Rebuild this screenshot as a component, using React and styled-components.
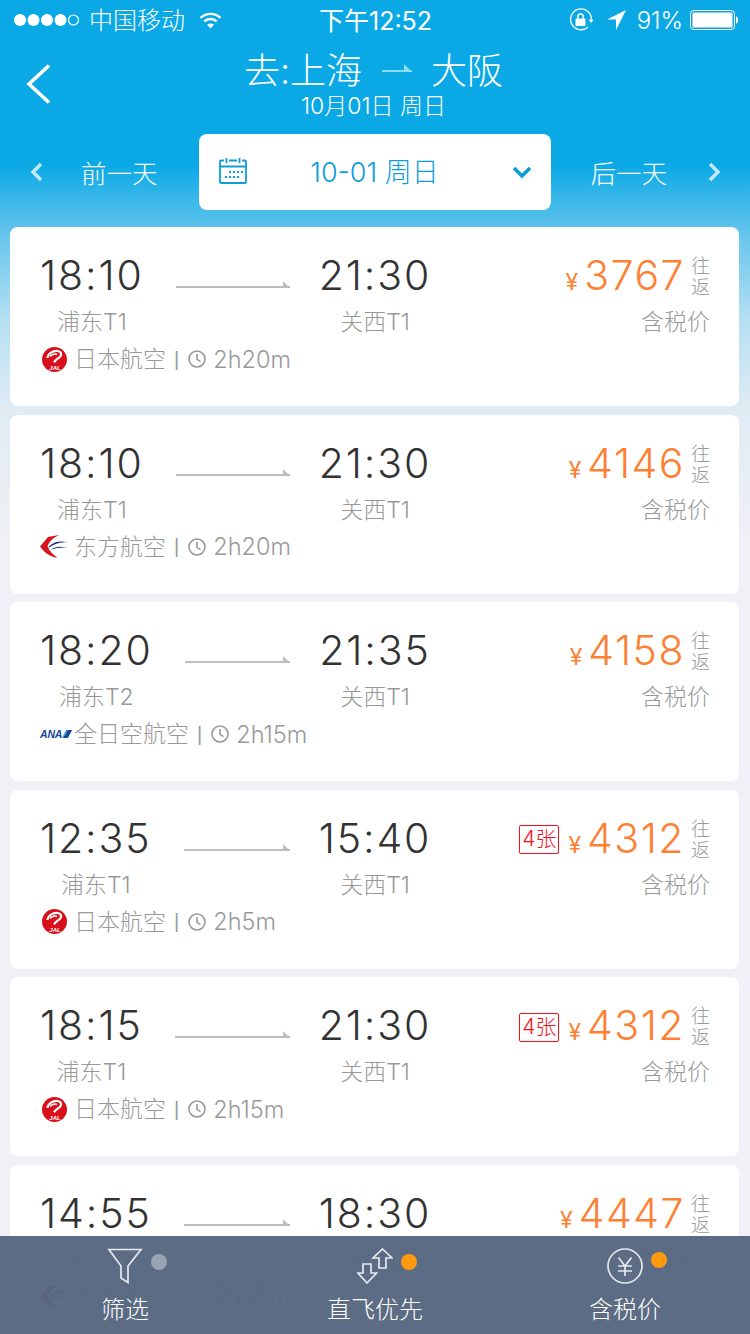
import React from "react";
import styled, { createGlobalStyle } from "styled-components";

const Global = createGlobalStyle`
  html, body {
    margin: 0;
    padding: 0;
    height: 1334px;
    overflow: hidden;
  }
  body {
    font-family: Inter, "Noto Sans CJK SC", sans-serif;
    font-weight: 300;
  }
`;

const Page = styled.div`
  position: relative;
  width: 750px;
  height: 1334px;
  overflow: hidden;
  background: linear-gradient(
    180deg,
    #0aa9e6 0,
    #0aa9e6 165px,
    #62c3ec 230px,
    #b5e0f3 320px,
    #e0ebf4 410px,
    #f0f0f6 540px
  );
`;

const StatusBar = styled.div`
  height: 40px;
  display: flex;
  align-items: center;
  justify-content: space-between;
  padding: 0 12px 0 13px;
  color: #fff;
`;
const StatusSide = styled.div`
  width: 260px;
  display: flex;
  align-items: center;
  justify-content: ${(p) => (p.$right ? "flex-end" : "flex-start")};
  gap: ${(p) => (p.$right ? "7px" : "9px")};
  font-size: 24px;
`;
const Carrier = styled.span`
  padding-bottom: 3px;
  margin-right: 5px;
`;
const StatusIcon = styled.div`
  display: flex;
  margin-right: ${(p) => p.$gap}px;
`;
const StatusTime = styled.div`
  font-size: 25px;
  font-weight: 400;
  padding-bottom: 3px;
`;

const Nav = styled.div`
  display: grid;
  grid-template-columns: 1fr auto 1fr;
  align-items: center;
  padding-top: 9px;
  color: #fff;
`;
const BackSlot = styled.div`
  padding: 4px 0 0 26px;
`;
const NavTitle = styled.div`
  display: flex;
  flex-direction: column;
  align-items: center;
  padding-right: 3px;
`;
const Route = styled.div`
  display: flex;
  align-items: center;
  font-size: 36px;
  line-height: 44px;
  height: 44px;
`;
const RouteArrow = styled.div`
  width: 30px;
  margin: 0 19px 0 20px;
`;
const NavDate = styled.div`
  font-size: 23px;
  line-height: 26px;
`;

const DateRow = styled.div`
  display: grid;
  grid-template-columns: 199px 352px 199px;
  align-items: center;
  margin-top: 15px;
`;
const DayButton = styled.div`
  display: flex;
  align-items: center;
  justify-content: ${(p) => (p.$next ? "flex-end" : "flex-start")};
  gap: ${(p) => (p.$next ? "41px" : "38px")};
  padding: ${(p) => (p.$next ? "0 29px 0 0" : "0 0 0 30px")};
  color: #fff;
  font-size: 25.5px;
`;
const DayLabel = styled.span`
  padding-bottom: 2px;
`;
const DatePicker = styled.div`
  height: 76px;
  box-sizing: border-box;
  background: #fff;
  border-radius: 8px;
  display: flex;
  align-items: center;
  justify-content: space-between;
  padding: 0 19px 0 20px;
  color: #0d9ddb;
  font-size: 27px;
`;
const PickedDate = styled.span`
  margin-right: 10px;
  padding-bottom: 3px;
`;
const CalendarSlot = styled.div`
  display: flex;
  padding-bottom: 3px;
`;

const List = styled.div`
  display: flex;
  flex-direction: column;
  gap: 8.5px;
  padding: 17px 11px 0 10px;
`;
const Card = styled.div`
  height: 179px;
  flex-shrink: 0;
  box-sizing: border-box;
  background: #fff;
  border-radius: 8px;
  padding: 24px 29px 0 30px;
  display: flex;
  justify-content: space-between;
`;
const FlightInfo = styled.div`
  width: 390px;
`;
const Times = styled.div`
  display: flex;
  align-items: flex-start;
`;
const Stop = styled.div`
  display: flex;
  flex-direction: column;
  align-items: center;
  flex-shrink: 0;
  width: ${(p) => p.$width || "auto"};
`;
const Time = styled.div`
  font-size: 41px;
  line-height: 48px;
  letter-spacing: 1.9px;
  color: #333;
`;
const Terminal = styled.div`
  font-size: 23px;
  line-height: 34px;
  margin-top: 6px;
  color: #999;
`;
const FlightArrow = styled.div`
  flex: 1;
  margin: 35px 30px 0 32px;
`;
const LineArrow = styled.div`
  position: relative;
  height: 2px;
  background: ${(p) => p.$color};
  &::after {
    content: "";
    position: absolute;
    right: 0;
    bottom: 0;
    border-style: solid;
    border-width: 0 ${(p) => p.$head}px ${(p) => p.$head}px 0;
    border-color: transparent transparent ${(p) => p.$color} transparent;
  }
`;
const Airline = styled.div`
  display: flex;
  align-items: center;
  height: 30px;
  margin-top: 5px;
  font-size: 23px;
  color: #999;
`;
const LogoSlot = styled.div`
  width: ${(p) => p.$width}px;
  box-sizing: border-box;
  padding-left: ${(p) => p.$inset}px;
  display: flex;
  align-items: center;
  flex-shrink: 0;
`;
const AirlineName = styled.span`
  margin-top: -4px;
`;
const Divider = styled.span`
  margin: 0 9px 0 8px;
  font-family: "Liberation Sans", sans-serif;
  font-size: 20px;
`;
const Duration = styled.span`
  font-size: 23.5px;
  margin-left: 7px;
`;

const PriceInfo = styled.div`
  display: flex;
  flex-direction: column;
  align-items: flex-end;
`;
const PriceRow = styled.div`
  display: flex;
  align-items: center;
  height: 48px;
  color: #fc8134;
`;
const Badge = styled.div`
  width: 40px;
  height: 29px;
  box-sizing: border-box;
  margin: 4px 9px 0 0;
  border: 1px solid #f5101e;
  border-radius: 2px;
  color: #f5101e;
  font-size: 21px;
  line-height: 26px;
  text-align: center;
`;
const Yen = styled.span`
  font-size: 23px;
  font-weight: 400;
  margin: 14px 6px 0 0;
`;
const Amount = styled.span`
  font-size: 41px;
  line-height: 48px;
  letter-spacing: 1.5px;
`;
const RoundTrip = styled.div`
  width: 19px;
  margin: 4px 0 0 6px;
  font-size: 19px;
  line-height: 21px;
  color: #999;
`;
const TaxNote = styled.div`
  font-size: 23px;
  line-height: 34px;
  margin-top: 6px;
  color: #999;
`;

const BottomBar = styled.div`
  position: absolute;
  left: 0;
  right: 0;
  bottom: 0;
  height: 98px;
  display: grid;
  grid-template-columns: repeat(3, 1fr);
  background: rgba(87, 103, 128, 0.97);
  color: #fff;
`;
const BarItem = styled.div`
  display: flex;
  flex-direction: column;
  align-items: center;
  padding-top: 12px;
`;
const BarIcon = styled.div`
  position: relative;
  width: 36px;
  height: 36px;
  display: flex;
  justify-content: center;
`;
const BarDot = styled.span`
  position: absolute;
  left: 44px;
  top: ${(p) => p.$top}px;
  width: 16px;
  height: 16px;
  border-radius: 50%;
  background: ${(p) => (p.$active ? "#ff9a0f" : "#9aa3b2")};
`;
const BarLabel = styled.div`
  font-size: 24px;
  line-height: 30px;
  margin-top: 11px;
`;

const Signal = () => (
  <svg width="67" height="14" viewBox="0 0 67 14">
    {[7, 20.5, 34, 47.5].map((x) => (
      <circle key={x} cx={x} cy="7" r="6" fill="#fff" />
    ))}
    <circle cx="60.5" cy="7" r="5" fill="none" stroke="#fff" strokeWidth="1.2" />
  </svg>
);

const Wifi = () => (
  <svg width="23" height="17" viewBox="0 0 24 18" fill="none" stroke="#fff" strokeWidth="2.6">
    <path d="M1.5 6.2C7.5 .6 16.5 .6 22.5 6.2" />
    <path d="M5.4 10C9.2 6.6 14.8 6.6 18.6 10" />
    <path d="M12 17.5 8.4 13.4C10.4 11.8 13.6 11.8 15.6 13.4Z" fill="#fff" stroke="none" />
  </svg>
);

const RotationLock = () => (
  <svg width="24" height="24" viewBox="0 0 24 24" fill="none" stroke="#fff" strokeWidth="1.3">
    <path d="M19 19A10.4 10.4 0 1 1 22.4 11.5" />
    <path d="M19.6 11.5h5l-2.5 3.4Z" fill="#fff" stroke="none" />
    <rect x="6.5" y="10.5" width="10" height="7.5" rx="1" fill="#fff" stroke="none" />
    <path d="M8.8 10.5V8.6a2.7 2.7 0 0 1 5.4 0v1.9" strokeWidth="1.5" />
  </svg>
);

const Location = () => (
  <svg width="19" height="20" viewBox="0 0 19 20">
    <path d="M19 0 0 9.5h9V20Z" fill="#fff" />
  </svg>
);

const Battery = () => (
  <svg width="48" height="20" viewBox="0 0 48 20">
    <rect x=".5" y=".5" width="44" height="19" rx="3.5" fill="none" stroke="#fff" />
    <rect x="2.5" y="2.5" width="40" height="15" rx="1.5" fill="#fff" />
    <path d="M46 6.5c1.5 0 2 1.2 2 3.5s-.5 3.5-2 3.5Z" fill="#fff" />
  </svg>
);

const BackChevron = () => (
  <svg width="25" height="40" viewBox="0 0 25 40" fill="none" stroke="#fff" strokeWidth="3.6">
    <path d="M23 1.5 3 20l20 18.5" />
  </svg>
);

const SmallChevron = ({ right }) => (
  <svg width="13" height="20" viewBox="0 0 13 20" fill="none" stroke="#c4e9f9" strokeWidth="3.4">
    <path d={right ? "M2 2l8 8-8 8" : "M11 2l-8 8 8 8"} />
  </svg>
);

const CalendarIcon = () => (
  <svg width="28" height="27" viewBox="0 0 28 27" fill="none" stroke="#0d9ddb" strokeWidth="1.8">
    <path d="M5 3.5H2a1 1 0 0 0-1 1V25a1 1 0 0 0 1 1h24a1 1 0 0 0 1-1V4.5a1 1 0 0 0-1-1h-3M10 3.5h8" />
    <path d="M1 9.5h26M7.5 1v5M20.5 1v5" />
    <path
      d="M10 14h2v2h-2zM14 14h2v2h-2zM18 14h2v2h-2zM22 14h2v2h-2zM6 19h2v2H6zM10 19h2v2h-2zM14 19h2v2h-2zM18 19h2v2h-2z"
      fill="#0d9ddb"
      stroke="none"
    />
  </svg>
);

const ChevronDown = () => (
  <svg width="20" height="13" viewBox="0 0 20 13" fill="none" stroke="#0d9ddb" strokeWidth="3.6">
    <path d="M2 2l8 8 8-8" />
  </svg>
);

const ClockIcon = () => (
  <svg width="18" height="18" viewBox="0 0 18 18" fill="none" stroke="#999" strokeWidth="1.6">
    <circle cx="9" cy="9" r="8" />
    <path d="M9 4v5.4l3.5 2.2" />
  </svg>
);

const JalLogo = () => (
  <svg width="25" height="25" viewBox="0 0 25 25">
    <circle cx="12.5" cy="12.5" r="12.5" fill="#d9101c" />
    <path
      d="M5.5 11C6 6.5 11 3.5 15.5 4c3.5.4 4.5 3 2.8 5.3-1.5 2-4.5 3.3-6.3 6"
      fill="none"
      stroke="#fff"
      strokeWidth="2.2"
    />
    <path d="M8 9.5c2-2.5 5.5-3 7-2" fill="none" stroke="#fff" strokeWidth="1.6" />
    <text
      x="13"
      y="22.5"
      textAnchor="middle"
      fill="#fff"
      fontFamily="Liberation Sans, sans-serif"
      fontSize="6"
      fontStyle="italic"
      fontWeight="700"
    >
      JAL
    </text>
  </svg>
);

const EasternLogo = () => (
  <svg width="28" height="23" viewBox="0 0 28 23">
    <path d="M0 11.5 8 2 19 0C12.5 3 9 7 7.5 11.5c2 4.5 5.5 8.500 10 11C10 22 5 18 0 11.5Z" fill="#d8141f" />
    <path d="M8 13.5C11 8 18 5 28 7.5 20 6.5 13.5 9 8 13.5Z" fill="#1d2a86" />
    <path d="M11 14.5C15 11.5 20 11 27 12.5c-6-.4-11 .4-16 2Z" fill="#1d2a86" />
  </svg>
);

const AnaMark = styled.div`
  display: flex;
  align-items: center;
  font-family: "Liberation Sans", sans-serif;
  font-size: 10.5px;
  font-weight: 700;
  font-style: italic;
  letter-spacing: -0.2px;
  color: #12468f;
`;
const AnaStripes = styled.span`
  width: 6px;
  height: 8px;
  margin-left: 2px;
  transform: skewX(-28deg);
  background: linear-gradient(90deg, #4c93d6 0 30%, #12468f 30% 100%);
`;
const AnaLogo = () => (
  <AnaMark>
    ANA
    <AnaStripes />
  </AnaMark>
);

const FilterIcon = () => (
  <svg width="36" height="36" viewBox="0 0 36 36" fill="none" stroke="#e6e9ee" strokeWidth="1.7">
    <path d="M2 1.5h32L21 18v16.5l-7-4.5V18Z" />
  </svg>
);

const DirectIcon = () => (
  <svg width="36" height="36" viewBox="0 0 36 36" fill="none" stroke="#e6e9ee" strokeWidth="1.7">
    <path d="M25.5 1 35 10h-6v10h-7V10h-6Z" />
    <path d="M10 35 19.5 25H14V16H6v9H1Z" />
  </svg>
);

const TaxIcon = () => (
  <svg width="36" height="36" viewBox="0 0 36 36" fill="none" stroke="#e6e9ee" strokeWidth="1.7">
    <circle cx="18" cy="18" r="17" />
    <path d="M11.5 9.5 18 18l6.5-8.5M18 18v10M11 18h14M11 23h14" />
  </svg>
);

const logos = {
  jal: { width: 34, inset: 2, icon: <JalLogo /> },
  mu: { width: 34, inset: 0, icon: <EasternLogo /> },
  ana: { width: 34, inset: 0, icon: <AnaLogo /> },
};

const flights = [
  { dep: "18:10", from: "浦东T1", arr: "21:30", logo: "jal", air: "日本航空", dur: "2h20m", price: "3767" },
  { dep: "18:10", from: "浦东T1", arr: "21:30", logo: "mu", air: "东方航空", dur: "2h20m", price: "4146" },
  { dep: "18:20", from: "浦东T2", arr: "21:35", logo: "ana", air: "全日空航空", dur: "2h15m", price: "4158" },
  { dep: "12:35", from: "浦东T1", arr: "15:40", logo: "jal", air: "日本航空", dur: "2h5m", price: "4312", left: "4张" },
  { dep: "18:15", from: "浦东T1", arr: "21:30", logo: "jal", air: "日本航空", dur: "2h15m", price: "4312", left: "4张" },
  { dep: "14:55", from: "浦东T1", arr: "18:30", logo: "mu", air: "东方航空", dur: "2h35m", price: "4447" },
];

const tabs = [
  { label: "筛选", icon: <FilterIcon />, active: false, top: 6 },
  { label: "直飞优先", icon: <DirectIcon />, active: true, top: 6 },
  { label: "含税价", icon: <TaxIcon />, active: true, top: 4 },
];

const FlightCard = ({ flight }) => {
  const logo = logos[flight.logo];
  return (
    <Card>
      <FlightInfo>
        <Times>
          <Stop>
            <Time>{flight.dep}</Time>
            <Terminal>{flight.from}</Terminal>
          </Stop>
          <FlightArrow>
            <LineArrow $color="#bdbdbd" $head={7} />
          </FlightArrow>
          <Stop $width="110px">
            <Time>{flight.arr}</Time>
            <Terminal>关西T1</Terminal>
          </Stop>
        </Times>
        <Airline>
          <LogoSlot $width={logo.width} $inset={logo.inset}>
            {logo.icon}
          </LogoSlot>
          <AirlineName>{flight.air}</AirlineName>
          <Divider>|</Divider>
          <ClockIcon />
          <Duration>{flight.dur}</Duration>
        </Airline>
      </FlightInfo>
      <PriceInfo>
        <PriceRow>
          {flight.left && <Badge>{flight.left}</Badge>}
          <Yen>¥</Yen>
          <Amount>{flight.price}</Amount>
          <RoundTrip>往返</RoundTrip>
        </PriceRow>
        <TaxNote>含税价</TaxNote>
      </PriceInfo>
    </Card>
  );
};

const App = () => (
  <Page>
    <Global />
    <StatusBar>
      <StatusSide>
        <Signal />
        <Carrier>中国移动</Carrier>
        <Wifi />
      </StatusSide>
      <StatusTime>下午12:52</StatusTime>
      <StatusSide $right>
        <StatusIcon $gap={7}>
          <RotationLock />
        </StatusIcon>
        <StatusIcon $gap={4}>
          <Location />
        </StatusIcon>
        <span>91%</span>
        <Battery />
      </StatusSide>
    </StatusBar>
    <Nav>
      <BackSlot>
        <BackChevron />
      </BackSlot>
      <NavTitle>
        <Route>
          去:上海
          <RouteArrow>
            <LineArrow $color="#8adcf7" $head={8} />
          </RouteArrow>
          大阪
        </Route>
        <NavDate>10月01日 周日</NavDate>
      </NavTitle>
    </Nav>
    <DateRow>
      <DayButton>
        <SmallChevron />
        <DayLabel>前一天</DayLabel>
      </DayButton>
      <DatePicker>
        <CalendarSlot>
          <CalendarIcon />
        </CalendarSlot>
        <PickedDate>10-01 周日</PickedDate>
        <ChevronDown />
      </DatePicker>
      <DayButton $next>
        <DayLabel>后一天</DayLabel>
        <SmallChevron right />
      </DayButton>
    </DateRow>
    <List>
      {flights.map((flight, i) => (
        <FlightCard key={i} flight={flight} />
      ))}
    </List>
    <BottomBar>
      {tabs.map((tab) => (
        <BarItem key={tab.label}>
          <BarIcon>
            {tab.icon}
            <BarDot $active={tab.active} $top={tab.top} />
          </BarIcon>
          <BarLabel>{tab.label}</BarLabel>
        </BarItem>
      ))}
    </BottomBar>
  </Page>
);

export default App;
